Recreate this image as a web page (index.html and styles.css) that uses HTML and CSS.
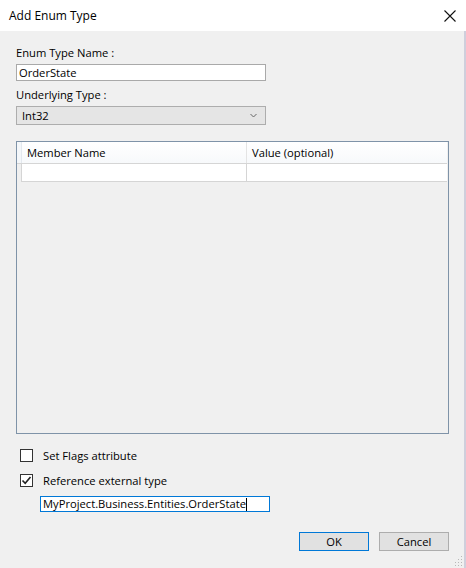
FILE: index.html
```html
<!DOCTYPE html>
<html>
<head>
<meta charset="utf-8">
<link rel="stylesheet" href="styles.css">
</head>
<body>
<div class="window">
  <div class="titlebar">
    <span class="title">Add Enum Type</span>
    <svg class="close" width="12" height="12" viewBox="0 0 12 12"><path d="M0.5 0.5 L11.5 11.5 M11.5 0.5 L0.5 11.5" stroke="#111" stroke-width="1.1" fill="none"/></svg>
  </div>
  <div class="content">
    <div class="label first">Enum Type Name :</div>
    <div class="textbox">OrderState</div>
    <div class="label second">Underlying Type :</div>
    <div class="select">
      <span>Int32</span>
      <svg width="7" height="5" viewBox="0 0 7 5"><path d="M0.5 1 L3.5 4 L6.5 1" stroke="#666" stroke-width="1" fill="none"/></svg>
    </div>
    <div class="grid">
      <div class="gridhead">
        <div class="rowhdr"></div>
        <div class="col c1">Member Name</div>
        <div class="col c2">Value (optional)</div>
      </div>
      <div class="gridrow">
        <div class="rowhdr"></div>
        <div class="cell c1"></div>
        <div class="cell c2"></div>
      </div>
    </div>
    <div class="check first">
      <span class="box"></span>
      <span class="ctext">Set Flags attribute</span>
    </div>
    <div class="check second">
      <span class="box">
        <svg width="11" height="11" viewBox="0 0 11 11"><path d="M1.5 5.5 L4.2 8.3 L9.5 2" stroke="#222" stroke-width="1.6" fill="none"/></svg>
      </span>
      <span class="ctext">Reference external type</span>
    </div>
    <div class="extbox">MyProject.Business.Entities.OrderState<span class="caret"></span></div>
    <div class="buttons">
      <div class="btn default">OK</div>
      <div class="btn">Cancel</div>
    </div>
  </div>
  <div class="grip">
    <svg width="10" height="10" viewBox="0 0 10 10" fill="#b8b8b8">
      <rect x="8" y="0" width="1" height="1"/>
      <rect x="5" y="3" width="1" height="1"/><rect x="8" y="3" width="1" height="1"/>
      <rect x="2" y="6" width="1" height="1"/><rect x="5" y="6" width="1" height="1"/><rect x="8" y="6" width="1" height="1"/>
      <rect x="2" y="9" width="1" height="1"/><rect x="5" y="9" width="1" height="1"/><rect x="8" y="9" width="1" height="1"/>
    </svg>
  </div>
</div>
</body>
</html>
```
FILE: styles.css
```css
* { box-sizing: border-box; }
html, body { margin: 0; padding: 0; }
body {
  font-family: "Open Sans", "Noto Sans", "Liberation Sans", sans-serif;
  font-size: 11.2px;
  color: #000;
  background: #f0f0f0;
}
.window {
  position: relative;
  width: 466px;
  height: 568px;
  display: flex;
  flex-direction: column;
  background: #f0f0f0;
  border-right: 2px solid #cfcfdc;
}
.titlebar {
  height: 31px;
  background: #fff;
  display: flex;
  align-items: center;
  justify-content: space-between;
  padding: 0 9px 0 9px;
  margin-right: -2px;
}
.title { font-size: 12px; }
.close { margin-right: 1px; }
.content {
  flex: 1;
  display: flex;
  flex-direction: column;
  align-items: flex-start;
  padding: 14px 15px 0 16px;
}
.label { line-height: 16px; height: 16px; }
.label.first { margin-bottom: 3px; }
.label.second { margin-top: 6px; margin-bottom: 3px; }
.textbox {
  width: 250px;
  height: 17px;
  background: #fff;
  border: 1px solid #a9a9a9;
  line-height: 15px;
  padding-left: 2px;
}
.select {
  width: 250px;
  height: 19px;
  background: #e5e5e5;
  border: 1px solid #adadad;
  display: flex;
  align-items: center;
  justify-content: space-between;
  padding: 0 8px 0 5px;
  line-height: 17px;
}
.grid {
  margin-top: 16px;
  width: 433px;
  height: 293px;
  border: 1px solid #7f93a8;
  background: #f0f0f0;
  display: flex;
  flex-direction: column;
  padding-right: 1px;
}
.gridhead {
  display: flex;
  height: 22px;
  background: linear-gradient(#ffffff, #f7f9fb);
  border-bottom: 1px solid #d5d5d5;
}
.gridrow {
  display: flex;
  height: 18px;
}
.rowhdr {
  width: 5px;
  background: #f4f7fa;
  border-right: 1px solid #e3e8ee;
}
.gridrow .rowhdr { background: #f0f0f0; border-right: 1px solid #d5d5d5; }
.col {
  line-height: 21px;
  padding-left: 5px;
}
.c1 { width: 225px; }
.c2 { flex: 1; }
.gridhead .c1 { border-right: 1px solid #e4e4e4; }
.cell {
  background: #fff;
  border-bottom: 1px solid #d5d5d5;
}
.gridrow .c1 { border-right: 1px solid #d5d5d5; }
.check {
  display: flex;
  align-items: center;
  height: 13px;
  margin-left: 4px;
}
.check.first { margin-top: 15px; }
.check.second { margin-top: 12px; }
.box {
  width: 13px;
  height: 13px;
  border: 1px solid #333;
  background: #fff;
  display: flex;
  align-items: center;
  justify-content: center;
}
.ctext { margin-left: 10px; line-height: 16px; }
.extbox {
  margin-top: 9px;
  margin-left: 24px;
  width: 230px;
  height: 16px;
  background: #fff;
  border: 1px solid #0078d7;
  line-height: 14px;
  padding-left: 2px;
  display: flex;
  align-items: center;
}
.caret {
  display: inline-block;
  width: 1px;
  height: 13px;
  background: #000;
}
.buttons {
  margin-top: 20px;
  align-self: flex-end;
  display: flex;
  gap: 10px;
}
.btn {
  width: 70px;
  height: 19px;
  background: #e1e1e1;
  border: 1px solid #adadad;
  text-align: center;
  line-height: 17px;
}
.btn.default { border-color: #0078d7; }
.grip {
  position: absolute;
  right: 1px;
  bottom: 2px;
  line-height: 0;
}
```
